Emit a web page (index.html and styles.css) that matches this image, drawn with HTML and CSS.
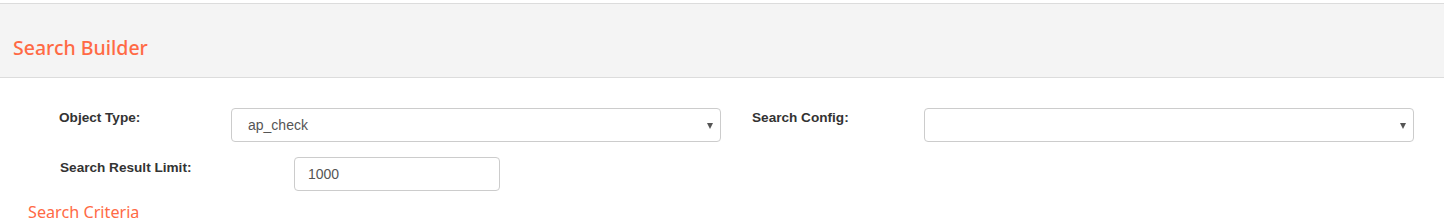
FILE: index.html
```html
<!DOCTYPE html>
<html>
<head>
<meta charset="utf-8">
<link rel="stylesheet" href="styles.css">
</head>
<body>
<div class="panel">
  <h2 class="panel-title">Search Builder</h2>
</div>
<div class="form">
  <div class="row row-1">
    <label class="label label-obj">Object Type:</label>
    <div class="select">
      <span class="select-text">ap_check</span>
      <span class="caret"></span>
    </div>
    <label class="label label-cfg">Search Config:</label>
    <div class="select">
      <span class="select-text"></span>
      <span class="caret"></span>
    </div>
  </div>
  <div class="row row-2">
    <label class="label label-limit">Search Result Limit:</label>
    <div class="input">1000</div>
  </div>
  <h3 class="section-title">Search Criteria</h3>
</div>
</body>
</html>
```
FILE: styles.css
```css
html, body {
  margin: 0;
  padding: 0;
  background: #fff;
  overflow: hidden;
}
.panel {
  margin-top: 3px;
  margin-right: 1px;
  height: 73px;
  background: #f4f4f4;
  border-top: 1px solid #dcdcdc;
  border-bottom: 1px solid #dcdcdc;
  display: flex;
  align-items: flex-end;
  padding-left: 13px;
}
.panel-title {
  margin: 0 0 16px 0;
  font-family: "Noto Sans", "Open Sans", sans-serif;
  font-weight: 500;
  font-size: 19.5px;
  line-height: 26px;
  color: #ff6a45;
  letter-spacing: 0;
}
.form {
  padding-top: 30px;
  font-family: "Liberation Sans", Arial, sans-serif;
}
.row {
  display: flex;
  align-items: flex-start;
  height: 34px;
}
.row-1 { padding-left: 59px; }
.row-2 { padding-left: 60px; margin-top: 15px; }
.label {
  font-size: 13.6px;
  font-weight: 700;
  color: #333;
  line-height: 18px;
  padding-top: 1px;
}
.label-obj { width: 172px; }
.label-cfg { width: 172px; margin-left: 31px; }
.label-limit { width: 234px; padding-top: 2px; }
.select {
  box-sizing: border-box;
  width: 490px;
  height: 34px;
  border: 1px solid #ccc;
  border-radius: 4px;
  background: #fff;
  display: flex;
  align-items: center;
  justify-content: space-between;
  padding: 0 7px 0 16px;
}
.select-text {
  font-size: 14px;
  color: #555;
}
.caret {
  width: 0;
  height: 0;
  border-left: 3.5px solid transparent;
  border-right: 3.5px solid transparent;
  border-top: 6px solid #555;
  margin-top: 2px;
}
.input {
  box-sizing: border-box;
  width: 206px;
  height: 34px;
  border: 1px solid #ccc;
  border-radius: 4px;
  padding: 0 13px;
  display: flex;
  align-items: center;
  font-size: 14px;
  color: #555;
}
.section-title {
  margin: 10px 0 0 28px;
  font-family: "Noto Sans", "Open Sans", sans-serif;
  font-weight: 400;
  font-size: 16.2px;
  line-height: 22px;
  color: #ff6a45;
}
```
